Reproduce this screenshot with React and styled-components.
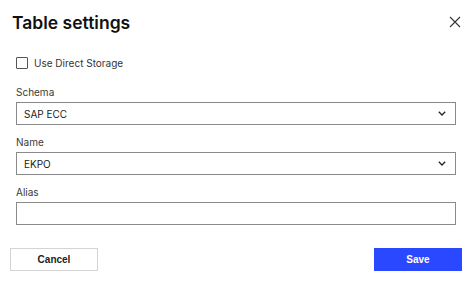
import React from 'react'
import styled, { createGlobalStyle } from 'styled-components'

const Global = createGlobalStyle`
  body {
    margin: 0;
    background: #fff;
    font-family: Inter, "Noto Sans", sans-serif;
    color: #1c1c1c;
  }
`

const ChevronDown = () => (
  <svg width="8" height="5" viewBox="0 0 8 5" fill="none">
    <path d="M0.8 0.8L4 4l3.2-3.2" stroke="#222" strokeWidth="1.3" />
  </svg>
)

const CloseIcon = () => (
  <svg width="12" height="12" viewBox="0 0 12 12" fill="none">
    <path d="M1 1l10 10M11 1L1 11" stroke="#333" strokeWidth="1.1" />
  </svg>
)

const App = () => {
  return (
    <>
      <Global />
      <Dialog>
        <Header>
          <Title>Table settings</Title>
          <CloseButton aria-label="Close">
            <CloseIcon />
          </CloseButton>
        </Header>
        <Body>
          <CheckRow>
            <Box />
            <span>Use Direct Storage</span>
          </CheckRow>
          <Field>
            <Label>Schema</Label>
            <Select>
              <span>SAP ECC</span>
              <ChevronDown />
            </Select>
          </Field>
          <Field>
            <Label>Name</Label>
            <Select>
              <span>EKPO</span>
              <ChevronDown />
            </Select>
          </Field>
          <Field>
            <Label>Alias</Label>
            <Input />
          </Field>
        </Body>
        <Footer>
          <Button>Cancel</Button>
          <Button primary>Save</Button>
        </Footer>
      </Dialog>
    </>
  )
}

export default App

const Dialog = styled.div`
  width: 474px;
  height: 283px;
  box-sizing: border-box;
  display: flex;
  flex-direction: column;
`
const Header = styled.div`
  display: flex;
  justify-content: space-between;
  align-items: center;
  height: 44px;
  padding: 0 13px 0 12px;
`
const Title = styled.h1`
  margin: 0;
  font-size: 17.5px;
  font-weight: 600;
  color: #111;
`
const CloseButton = styled.button`
  border: 0;
  background: none;
  padding: 0;
  display: flex;
  cursor: pointer;
`
const Body = styled.div`
  display: flex;
  flex-direction: column;
  padding: 12px 18px 0 16px;
`
const CheckRow = styled.label`
  display: flex;
  align-items: center;
  gap: 6px;
  font-size: 10px;
  color: #333;
  height: 14px;
  margin-bottom: 15px;
`
const Box = styled.span`
  width: 10px;
  height: 10px;
  border: 1px solid #555;
  border-radius: 1px;
`
const Field = styled.div`
  display: flex;
  flex-direction: column;
  gap: 3px;
  margin-bottom: 10px;
`
const Label = styled.div`
  font-size: 10px;
  line-height: 14px;
  color: #3a3a3a;
`
const Select = styled.div`
  display: flex;
  align-items: center;
  justify-content: space-between;
  height: 23px;
  box-sizing: border-box;
  border: 1px solid #8a8a8a;
  padding: 0 9px 0 7px;
  font-size: 10px;
  color: #222;
`
const Input = styled.div`
  height: 23px;
  box-sizing: border-box;
  border: 1px solid #8a8a8a;
`
const Footer = styled.div`
  display: flex;
  justify-content: space-between;
  padding: 13px 12px 0 10px;
`
const Button = styled.button`
  width: 88px;
  height: 23px;
  box-sizing: border-box;
  font-family: "Liberation Sans", Arial, sans-serif;
  font-size: 10px;
  font-weight: 700;
  border: 1px solid ${(p) => (p.primary ? '#2a48ff' : '#d4d4d4')};
  background: ${(p) => (p.primary ? '#2a48ff' : '#fff')};
  color: ${(p) => (p.primary ? '#fff' : '#222')};
  cursor: pointer;
`
